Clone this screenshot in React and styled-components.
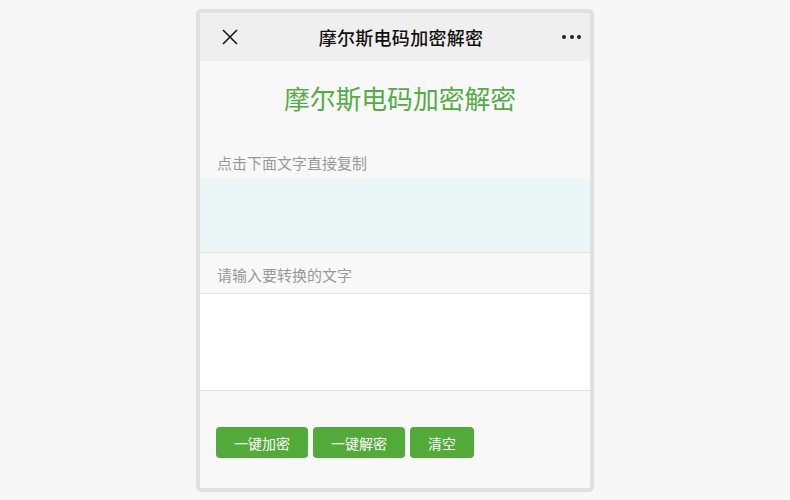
import React from "react";
import styled, { createGlobalStyle } from "styled-components";

const GlobalStyle = createGlobalStyle`
  html, body {
    margin: 0;
    padding: 0;
    background: #f7f7f7;
    font-family: "Noto Sans CJK SC", "Noto Sans", sans-serif;
  }
`;

function CloseIcon() {
  return (
    <svg width="18" height="18" viewBox="0 0 18 18">
      <path d="M2 2 L16 16 M16 2 L2 16" stroke="#1a1a1a" strokeWidth="1.6" fill="none" />
    </svg>
  );
}

function App() {
  return (
    <>
      <GlobalStyle />
      <Phone>
        <NavBar>
          <NavButton>
            <CloseIcon />
          </NavButton>
          <NavTitle>摩尔斯电码加密解密</NavTitle>
          <MoreButton>
            <Dot />
            <Dot />
            <Dot />
          </MoreButton>
        </NavBar>
        <Page>
          <PageTitle>摩尔斯电码加密解密</PageTitle>
          <Label $top={37}>点击下面文字直接复制</Label>
          <ResultBox />
          <Label $top={12}>请输入要转换的文字</Label>
          <InputArea />
          <ButtonRow>
            <ActionButton $width={92}>一键加密</ActionButton>
            <ActionButton $width={92}>一键解密</ActionButton>
            <ActionButton $width={64}>清空</ActionButton>
          </ButtonRow>
        </Page>
      </Phone>
    </>
  );
}

const Phone = styled.div`
  width: 390px;
  height: 475px;
  margin: 9px auto 0;
  border: 4px solid #e0e0e0;
  border-radius: 5px;
  background: #f8f8f8;
  display: flex;
  flex-direction: column;
  overflow: hidden;
`;

const NavBar = styled.div`
  height: 48px;
  flex-shrink: 0;
  background: #efefef;
  display: grid;
  grid-template-columns: 1fr auto 1fr;
  align-items: center;
  padding: 0 9px 0 21px;
`;

const NavButton = styled.div`
  width: 18px;
  height: 18px;
  display: flex;
`;

const NavTitle = styled.div`
  font-size: 18px;
  font-weight: 500;
  letter-spacing: 0.3px;
  color: #111;
`;

const MoreButton = styled.div`
  display: flex;
  gap: 3.5px;
  justify-content: flex-end;
`;

const Dot = styled.span`
  width: 4px;
  height: 4px;
  border-radius: 50%;
  background: #222;
`;

const Page = styled.div`
  flex: 1;
  display: flex;
  flex-direction: column;
`;

const PageTitle = styled.h1`
  margin: 19px 0 0;
  padding-left: 10px;
  font-size: 25.8px;
  font-weight: 400;
  line-height: 36px;
  text-align: center;
  color: #52ad44;
`;

const Label = styled.div`
  margin-top: ${(p) => p.$top}px;
  padding-left: 17px;
  font-size: 15px;
  line-height: 20px;
  color: #999;
`;

const ResultBox = styled.div`
  margin-top: 6px;
  height: 73px;
  background: #ebf7f7;
  border-bottom: 1px solid #e3e3e3;
`;

const InputArea = styled.div`
  margin-top: 8px;
  height: 96px;
  background: #fff;
  border-top: 1px solid #e3e3e3;
  border-bottom: 1px solid #e3e3e3;
`;

const ButtonRow = styled.div`
  display: flex;
  gap: 5px;
  padding: 36px 16px 0;
`;

const ActionButton = styled.button`
  width: ${(p) => p.$width}px;
  height: 31px;
  border: none;
  border-radius: 4px;
  background: #52aa38;
  color: #fff;
  font-family: inherit;
  font-size: 14px;
  padding: 0;
`;

export default App;
